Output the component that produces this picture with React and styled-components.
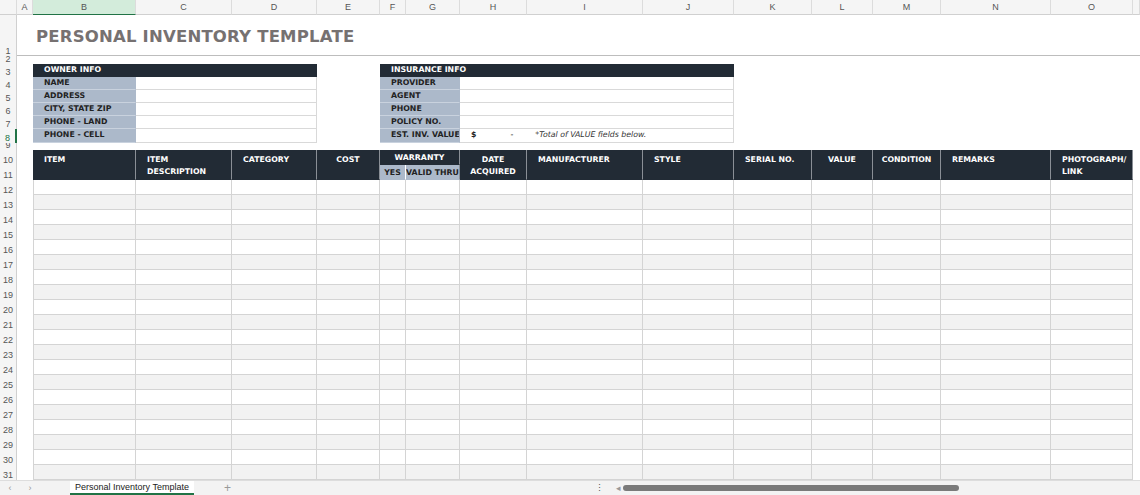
import React from "react";
import styled, { createGlobalStyle } from "styled-components";

const Global = createGlobalStyle`
  html,body{margin:0;padding:0;background:#fff;overflow:hidden;}
  *{box-sizing:border-box;}
`;

const COLS = [17, 16, 103, 96, 85, 63, 26, 54, 67, 116, 91, 78, 61, 68, 110, 82];
const LETTERS = ["A","B","C","D","E","F","G","H","I","J","K","L","M","N","O"];
const ROWS = [15, 41, 8, 13, 13, 13, 13, 13, 14, 7, 15, 15, ...Array(20).fill(15)];

const Page = styled.div`
  width: 1140px; height: 495px; display: flex; flex-direction: column;
  font-family: "DejaVu Sans", "Open Sans", sans-serif;
`;
const Sheet = styled.div`
  display: grid;
  grid-template-columns: ${COLS.map((c) => c + "px").join(" ")} 1fr;
  grid-template-rows: ${ROWS.map((r) => r + "px").join(" ")};
  height: 480px; overflow: hidden;
`;
const ColHead = styled.div`
  grid-row: 1; grid-column: ${(p) => p.$c};
  background: ${(p) => (p.$sel ? "#d3ecdb" : "#f5f5f5")};
  border-right: 1px solid #dcdcdc;
  border-bottom: 1px solid ${(p) => (p.$sel ? "#217346" : "#d0d0d0")};
  font-size: 9px; color: #555; display: flex; align-items: center; justify-content: center;
  font-family: "Liberation Sans", sans-serif;
`;
const RowHead = styled.div`
  grid-column: 1; grid-row: ${(p) => p.$r};
  background: #f5f5f5; border-right: 1px solid ${(p) => (p.$sel ? "#217346" : "#d0d0d0")};
  border-right-width: ${(p) => (p.$sel ? "2px" : "1px")};
  font-size: 9px; color: ${(p) => (p.$sel ? "#217346" : "#555")};
  font-family: "Liberation Sans", sans-serif;
  display: flex; align-items: flex-end; justify-content: center; line-height: 1; overflow: hidden;
`;
const Title = styled.div`
  grid-row: 2; grid-column: 2 / -1;
  border-bottom: 1px solid #bdbdbd;
  padding-left: 19px; padding-top: 12px;
  font-size: 16.5px; font-weight: bold; color: #767171; letter-spacing: 0.2px;
`;
const Cell = styled.div`
  grid-row: ${(p) => p.$r} / span ${(p) => p.$rs || 1};
  grid-column: ${(p) => p.$c} / span ${(p) => p.$cs || 1};
  background: ${(p) => p.$bg || "transparent"};
  color: ${(p) => p.$fg || "#222"};
  font-size: 7.8px; font-weight: bold; line-height: 12px;
  padding: ${(p) => p.$pad || "0 0 0 11px"};
  text-align: ${(p) => p.$align || "left"};
  border-right: 1px solid ${(p) => p.$bc || "transparent"};
  border-bottom: 1px solid ${(p) => p.$bb || "transparent"};
  white-space: ${(p) => (p.$pre ? "pre" : "nowrap")}; overflow: hidden;
`;
const Note = styled.span`
  font-weight: normal; font-style: italic; margin-left: ${(p) => p.$ml}px; color: #333;
`;
const DataCell = styled.div`
  grid-row: ${(p) => p.$r}; grid-column: ${(p) => p.$c};
  background: ${(p) => (p.$alt ? "#f2f2f2" : "#fff")};
  border-right: 1px solid #d4d4d4; border-bottom: 1px solid #d4d4d4;
  border-left: ${(p) => (p.$first ? "1px solid #d4d4d4" : "none")};
`;
const Bottom = styled.div`
  height: 15px; background: #f3f3f3; border-top: 1px solid #ddd;
  display: flex; align-items: center; font-family: "Liberation Sans", sans-serif;
  font-size: 9px; color: #999;
`;
const Arrow = styled.span`width: 20px; text-align: center;`;
const Tab = styled.div`
  margin-left: 30px; width: 124px; height: 100%; background: #fff; color: #222;
  display: flex; align-items: center; justify-content: center; font-size: 9px;
  border-bottom: 2px solid #217346;
`;
const Plus = styled.span`margin-left: 30px; font-size: 12px;`;
const Dots = styled.span`margin-left: 364px; font-size: 9px; color: #555;`;
const Track = styled.div`
  margin-left: 12px; display: flex; align-items: center; gap: 2px; flex: 1;
`;
const Thumb = styled.div`width: 336px; height: 6px; border-radius: 3px; background: #7a7a7a;`;

const DARK = "#222b35";
const LBL = "#acb9ca";
const LINE = "#d9d9d9";

const owner = ["NAME", "ADDRESS", "CITY, STATE ZIP", "PHONE - LAND", "PHONE - CELL"];
const ins = ["PROVIDER", "AGENT", "PHONE", "POLICY NO.", "EST. INV. VALUE"];

const heads = [
  { c: 3, t: "ITEM" }, { c: 4, t: "ITEM\nDESCRIPTION" }, { c: 5, t: "CATEGORY" },
  { c: 6, t: "COST", center: true }, { c: 9, t: "DATE\nACQUIRED", center: true },
  { c: 10, t: "MANUFACTURER" }, { c: 11, t: "STYLE" }, { c: 12, t: "SERIAL NO." },
  { c: 13, t: "VALUE", center: true }, { c: 14, t: "CONDITION", center: true },
  { c: 15, t: "REMARKS" }, { c: 16, t: "PHOTOGRAPH/\nLINK" },
];

export default function App() {
  const rowNums = [];
  for (let i = 1; i <= 31; i++) rowNums.push(<RowHead key={i} $r={i + 1} $sel={i === 8}>{i}</RowHead>);
  const data = [];
  for (let r = 12; r <= 31; r++)
    for (let c = 3; c <= 16; c++)
      data.push(<DataCell key={r + "-" + c} $r={r + 1} $c={c} $alt={r % 2 === 1} $first={c === 3} />);
  return (
    <Page>
      <Global />
      <Sheet>
        <ColHead $c={1} />
        {LETTERS.map((l, i) => <ColHead key={l} $c={i + 2} $sel={l === "B"}>{l}</ColHead>)}
        <ColHead $c={17} />
        {rowNums}
        <Title>PERSONAL INVENTORY TEMPLATE</Title>

        <Cell $r={4} $c={3} $cs={3} $bg={DARK} $fg="#fff">OWNER INFO</Cell>
        {owner.map((o, i) => (
          <React.Fragment key={o}>
            <Cell $r={5 + i} $c={3} $bg={LBL} $bb="#c9d2de">{o}</Cell>
            <Cell $r={5 + i} $c={4} $cs={2} $bc={LINE} $bb={LINE} />
          </React.Fragment>
        ))}
        <Cell $r={4} $c={7} $cs={5} $bg={DARK} $fg="#fff">INSURANCE INFO</Cell>
        {ins.map((o, i) => (
          <React.Fragment key={o}>
            <Cell $r={5 + i} $c={7} $cs={2} $bg={LBL} $bb="#c9d2de">{o}</Cell>
            <Cell $r={5 + i} $c={9} $cs={3} $bc={LINE} $bb={LINE}>
              {i === 4 && <>$<Note $ml={34}>-</Note><Note $ml={22}>*Total of VALUE fields below.</Note></>}
            </Cell>
          </React.Fragment>
        ))}

        {heads.map((h) => (
          <Cell key={h.c} $r={11} $rs={2} $c={h.c} $bg={DARK} $fg="#fff" $bc="#8a8f96" $pre
            $align={h.center ? "center" : "left"} $pad={h.center ? "4px 0 0 0" : "4px 0 0 11px"}>{h.t}</Cell>
        ))}
        <Cell $r={11} $c={7} $cs={2} $bg={DARK} $fg="#fff" $bc="#8a8f96" $align="center" $pad="2px 0 0 0">WARRANTY</Cell>
        <Cell $r={12} $c={7} $bg={LBL} $bc="#fff" $align="center" $pad="2px 0 0 0">YES</Cell>
        <Cell $r={12} $c={8} $bg={LBL} $bc="#8a8f96" $align="center" $pad="2px 0 0 0">VALID THRU</Cell>
        {data}
      </Sheet>
      <Bottom>
        <Arrow>‹</Arrow><Arrow>›</Arrow>
        <Tab>Personal Inventory Template</Tab>
        <Plus>+</Plus>
        <Dots>⋮</Dots>
        <Track><span>◂</span><Thumb /></Track>
      </Bottom>
    </Page>
  );
}
